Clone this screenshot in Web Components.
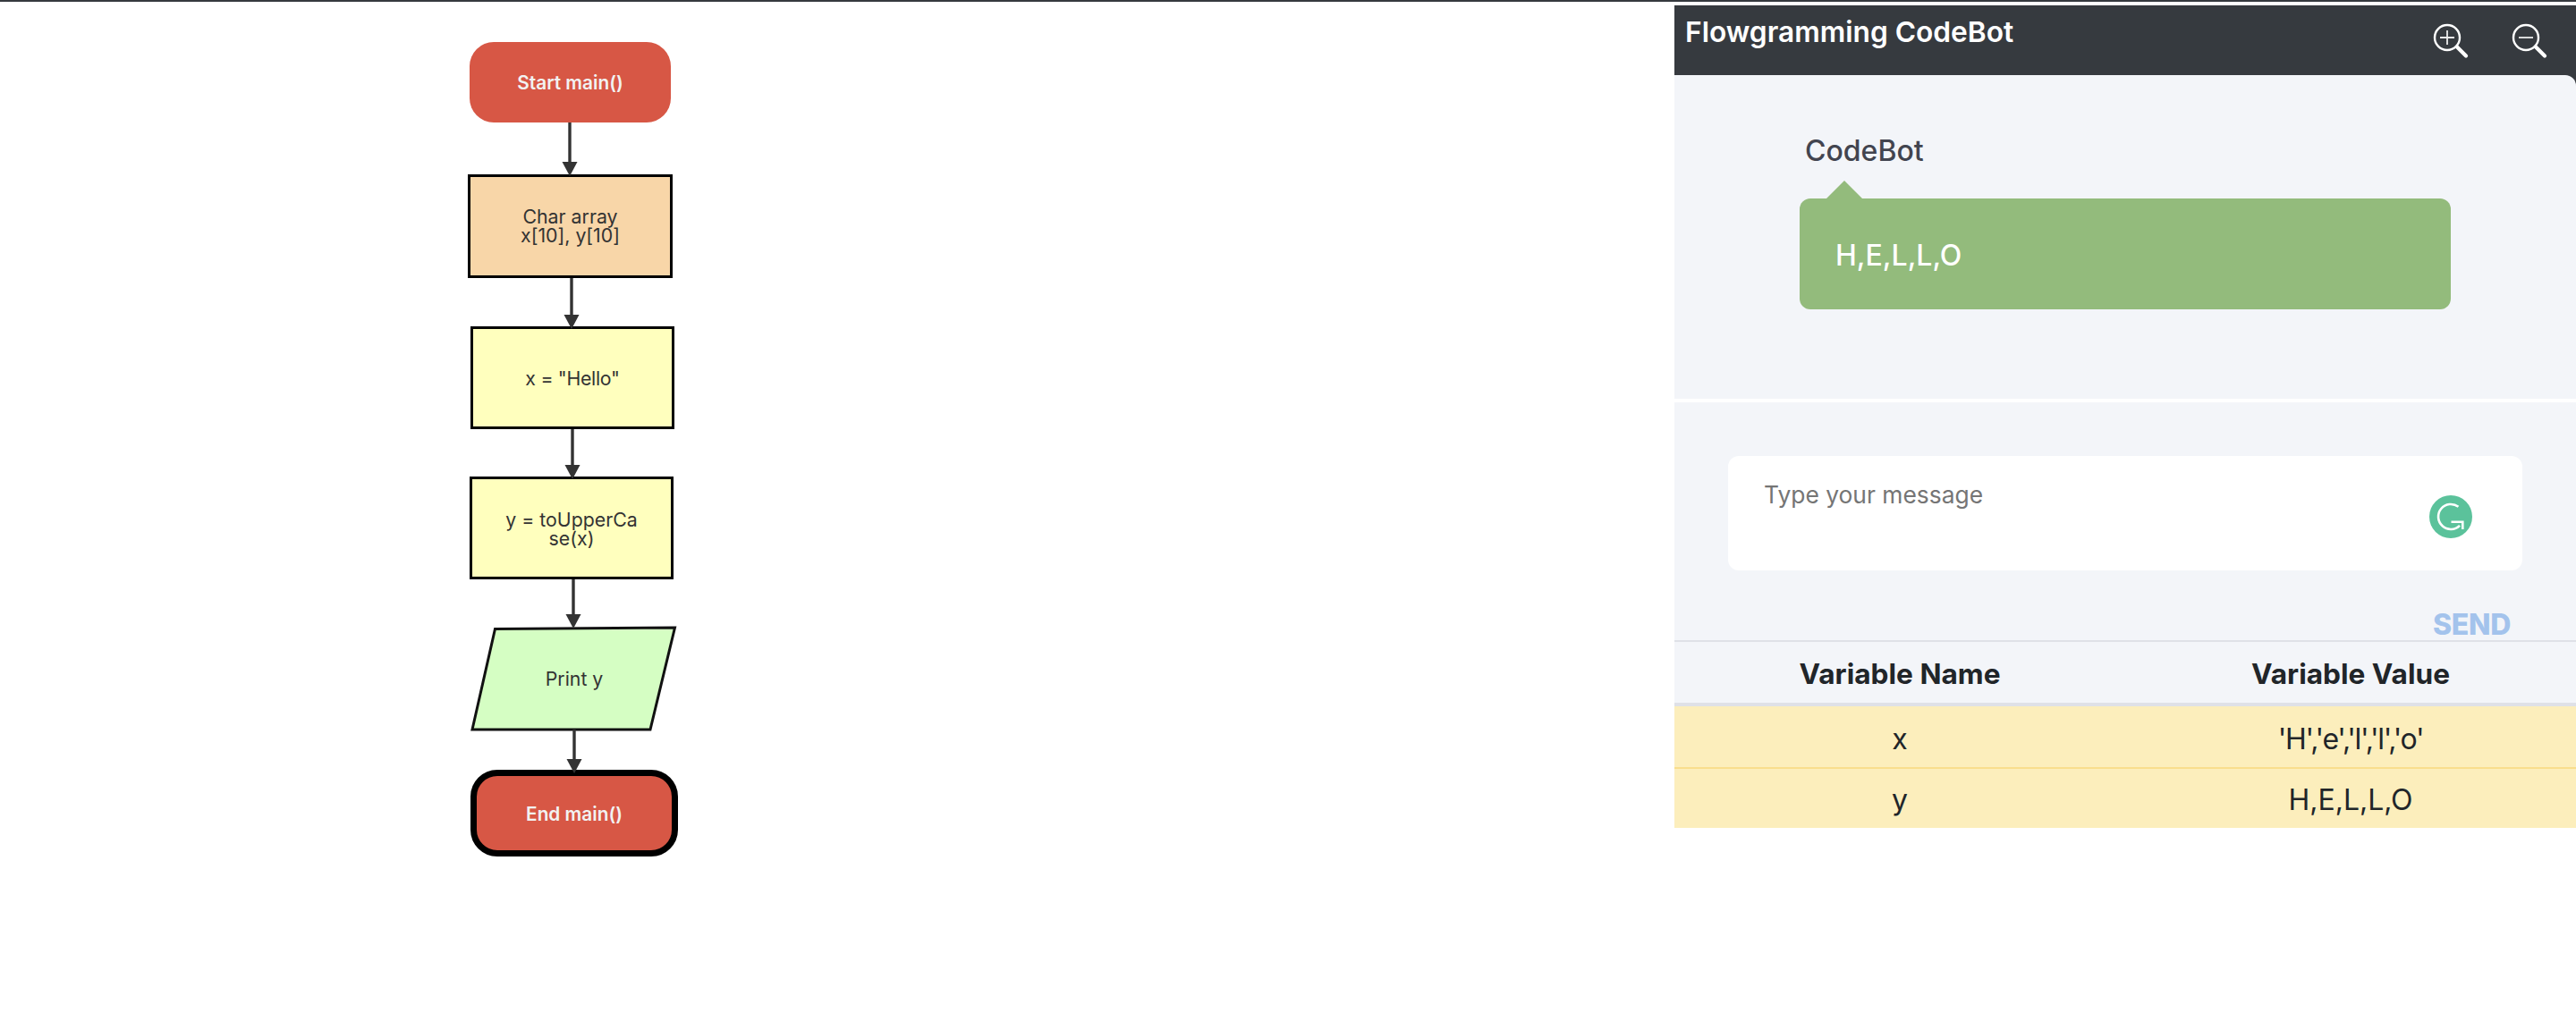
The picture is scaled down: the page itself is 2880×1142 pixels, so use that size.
<!DOCTYPE html>
<html>
<head>
<meta charset="utf-8">
<title>Flowgramming CodeBot</title>
<style>
  html, body { margin: 0; padding: 0; background: #fff; font-family: Inter, "Liberation Sans", sans-serif; }
</style>
</head>
<body>
<app-shell>
  <flow-canvas slot="left">
    <flow-node kind="terminal" style="--x:525px;--y:47px;--w:225px;--h:90px;--base:98px">Start main()</flow-node>
    <flow-node kind="decl" style="--x:523px;--y:195px;--w:229px;--h:116px;--base:248px">Char array<br>x[10], y[10]</flow-node>
    <flow-node kind="process" style="--x:526px;--y:365px;--w:228px;--h:115px;--base:429px;letter-spacing:-.3px">x = "Hello"</flow-node>
    <flow-node kind="process" style="--x:525px;--y:533px;--w:228px;--h:115px;--base:587px">y = toUpperCa<br>se(x)</flow-node>
    <flow-node kind="output" style="--x:526px;--y:700px;--w:232px;--h:118px;--base:765px">Print y</flow-node>
    <flow-node kind="end" style="--x:526px;--y:861px;--w:232px;--h:97px;--base:916px">End main()</flow-node>
  </flow-canvas>
  <codebot-panel slot="right">
    <chat-bubble name="CodeBot">H,E,L,L,O</chat-bubble>
    <message-box placeholder="Type your message"></message-box>
    <variable-table>
      <variable-row name="x" value="'H','e','l','l','o'" style="--track:-1.3px;--pad:17px"></variable-row>
      <variable-row name="y" value="H,E,L,L,O" style="--row:66px"></variable-row>
    </variable-table>
  </codebot-panel>
</app-shell>

<script>
class AppShell extends HTMLElement {
  constructor() {
    super()
    this.attachShadow({ mode: "open" })
    this.shadowRoot.innerHTML = `
      <style>
        :host { display: flex; width: 2880px; height: 1142px; border-top: 2px solid #363a3f; box-sizing: border-box; overflow: hidden; }
        .left { flex: 1; display: block; }
        .right { width: 1008px; flex: none; padding-top: 4px; }
      </style>
      <div class="left"><slot name="left"></slot></div>
      <div class="right"><slot name="right"></slot></div>
    `
  }
}

class FlowCanvas extends HTMLElement {
  constructor() {
    super()
    this.attachShadow({ mode: "open" })
    const arrows = [
      [637, 137, 637, 197],
      [639, 311, 639, 368],
      [640, 480, 640, 536],
      [641, 648, 641, 703],
      [642, 816, 642, 865]
    ]
    const lines = arrows.map(([x1, y1, x2, y2]) => `
      <line x1="${x1}" y1="${y1}" x2="${x2}" y2="${y2 - 10}" stroke="#333" stroke-width="3.4"/>
      <polygon points="${x2 - 8.5},${y2 - 16} ${x2 + 8.5},${y2 - 16} ${x2},${y2}" fill="#333"/>`).join("")
    this.shadowRoot.innerHTML = `
      <style>
        :host { display: block; position: relative; width: 1872px; height: 1140px; margin-top: -2px; }
        svg { position: absolute; left: 0; top: 0; z-index: 1; }
      </style>
      <svg width="1872" height="1140">${lines}</svg>
      <slot></slot>
    `
  }
}

class FlowNode extends HTMLElement {
  constructor() {
    super()
    this.attachShadow({ mode: "open" })
    this.shadowRoot.innerHTML = `
      <style>
        :host {
          display: block;
          position: absolute;
          left: var(--x);
          top: var(--y);
          width: var(--w);
          height: var(--h);
          font: 400 21.3px/21px Inter, "Liberation Sans", sans-serif;
          color: #333;
          text-align: center;
        }
        .box { position: absolute; inset: 0; box-sizing: border-box; border: 3px solid #000; }
        .text { position: absolute; left: 0; right: 0; white-space: nowrap; }
        :host([kind="terminal"]) .box, :host([kind="end"]) .box { background: #d75745; }
        :host([kind="terminal"]) .box { border: 0; border-radius: 27px; }
        :host([kind="end"]) .box { border-width: 7px; border-radius: 30px; }
        :host([kind="terminal"]), :host([kind="end"]) { color: #f2f2f2; font-size: 20.8px; font-weight: 600; }
        :host([kind="decl"]) .box { background: #f8d6a8; }
        :host([kind="process"]) .box { background: #ffffbe; }
        :host([kind="output"]) .box { display: none; }
        svg { position: absolute; inset: 0; display: none; }
        :host([kind="output"]) svg { display: block; }
      </style>
      <div class="box"></div>
      <svg width="232" height="118" viewBox="0 0 232 118">
        <polygon points="27.5,3.5 228.5,2 201,116 2,116" fill="#d5fec3" stroke="#111" stroke-width="3"/>
      </svg>
      <div class="text"><slot></slot></div>
    `
  }

  connectedCallback() {
    // first baseline comes in as a page coordinate, line box is 21px with the baseline about 16px down
    const y = parseFloat(this.style.getPropertyValue("--y"))
    const base = parseFloat(this.style.getPropertyValue("--base"))
    this.shadowRoot.querySelector(".text").style.top = `${base - y - 16}px`
  }
}

class CodebotPanel extends HTMLElement {
  constructor() {
    super()
    this.attachShadow({ mode: "open" })
    const glass = minus => `
      <svg width="40" height="40" viewBox="0 0 40 40" fill="none" stroke="#fff">
        <circle cx="16" cy="16" r="14" stroke-width="2.4"/>
        <path d="M8 16h16${minus ? "" : "M16 8v16"}" stroke-width="1.8" stroke-opacity=".9"/>
        <path d="M27 26.5l10 10" stroke-width="4.2" stroke-linecap="round"/>
      </svg>`
    this.shadowRoot.innerHTML = `
      <style>
        :host { display: block; font-family: Inter, "Liberation Sans", sans-serif; }
        header {
          height: 78px;
          background: #363a3f;
          display: flex;
          box-sizing: border-box;
          padding: 10px 32px 0 12px;
          color: #fff;
        }
        h1 { margin: 0; font-size: 31.7px; line-height: 40px; font-weight: 600; flex: 1; }
        .zoom { display: flex; gap: 48px; padding-top: 10px; }
        svg { display: block; }
        .body { background: linear-gradient(#363a3f 20px, #fff 20px); }
      </style>
      <header>
        <h1>Flowgramming CodeBot</h1>
        <div class="zoom">${glass(false)}${glass(true)}</div>
      </header>
      <div class="body"><slot></slot></div>
    `
  }
}

class ChatBubble extends HTMLElement {
  constructor() {
    super()
    this.attachShadow({ mode: "open" })
    this.shadowRoot.innerHTML = `
      <style>
        :host { display: block; height: 362px; box-sizing: border-box; background: #f3f5f9; border-top-right-radius: 12px; padding: 65px 140px 0 140px; }
        .name { font-size: 32px; line-height: 40px; font-weight: 500; color: #42444f; margin-left: 6px; }
        .msg {
          position: relative;
          margin-top: 33px;
          height: 124px;
          box-sizing: border-box;
          padding: 44px 40px 0;
          background: #93bb7c;
          border-radius: 12px;
          color: #fff;
          font-size: 32px;
          line-height: 40px;
          font-weight: 500;
        }
        .msg::before {
          content: "";
          position: absolute;
          left: 30px;
          top: -20px;
          border-left: 20px solid transparent;
          border-right: 20px solid transparent;
          border-bottom: 20px solid #93bb7c;
        }
      </style>
      <div class="name"></div>
      <div class="msg"><slot></slot></div>
    `
  }

  connectedCallback() {
    this.shadowRoot.querySelector(".name").textContent = this.getAttribute("name")
  }
}

class MessageBox extends HTMLElement {
  constructor() {
    super()
    this.attachShadow({ mode: "open" })
    this.shadowRoot.innerHTML = `
      <style>
        :host { display: block; height: 266px; box-sizing: border-box; margin-top: 4px; background: #f3f5f9; padding: 60px 60px 0; }
        .input {
          height: 128px;
          box-sizing: border-box;
          background: #fff;
          border-radius: 12px;
          padding: 25px 56px 0 40px;
          display: flex;
          justify-content: space-between;
          align-items: flex-start;
        }
        .hint { font-size: 26.4px; line-height: 36px; color: #757575; }
        svg { display: block; margin-top: 19px; }
        .send { text-align: right; margin: 41px 13px 0 0; font-size: 32px; line-height: 40px; font-weight: 800; letter-spacing: -.3px; color: #a3c3ec; }
      </style>
      <div class="input">
        <span class="hint"></span>
        <svg width="48" height="48" viewBox="0 0 48 48">
          <circle cx="24" cy="24" r="24" fill="#5bc29b"/>
          <path d="M32.5 12.8a14 14 0 1 0 1.5 21" fill="none" stroke="#fff" stroke-width="2.6"/>
          <path d="M24.5 29.7H37.3V38" fill="none" stroke="#fff" stroke-width="2.6"/>
        </svg>
      </div>
      <div class="send">SEND</div>
    `
  }

  connectedCallback() {
    this.shadowRoot.querySelector(".hint").textContent = this.getAttribute("placeholder")
  }
}

class VariableTable extends HTMLElement {
  constructor() {
    super()
    this.attachShadow({ mode: "open" })
    this.shadowRoot.innerHTML = `
      <style>
        :host { display: block; border-top: 2px solid #dfe1e7; color: #212529; font-size: 32px; }
        .head {
          display: grid;
          grid-template-columns: 1fr 1fr;
          height: 68px;
          background: #f3f5f9;
          border-bottom: 4px solid #dfe1e7;
          line-height: 40px;
          text-align: center;
        }
        .head div { padding-top: 16px; font-weight: 700; font-size: 31.6px; }
      </style>
      <div class="head"><div>Variable Name</div><div>Variable Value</div></div>
      <slot></slot>
    `
  }
}

class VariableRow extends HTMLElement {
  constructor() {
    super()
    this.attachShadow({ mode: "open" })
    this.shadowRoot.innerHTML = `
      <style>
        :host {
          display: grid;
          grid-template-columns: 1fr 1fr;
          height: var(--row, 68px);
          background: #fceebc;
          text-align: center;
          line-height: 40px;
        }
        :host(:not(:last-child)) { border-bottom: 2px solid #f9de8d; }
        div { padding-top: var(--pad, 15px); }
        .value { letter-spacing: var(--track, 0); }
      </style>
      <div class="name"></div>
      <div class="value"></div>
    `
  }

  connectedCallback() {
    this.shadowRoot.querySelector(".name").textContent = this.getAttribute("name")
    this.shadowRoot.querySelector(".value").textContent = this.getAttribute("value")
  }
}

customElements.define("app-shell", AppShell)
customElements.define("flow-canvas", FlowCanvas)
customElements.define("flow-node", FlowNode)
customElements.define("codebot-panel", CodebotPanel)
customElements.define("chat-bubble", ChatBubble)
customElements.define("message-box", MessageBox)
customElements.define("variable-table", VariableTable)
customElements.define("variable-row", VariableRow)
</script>
</body>
</html>
